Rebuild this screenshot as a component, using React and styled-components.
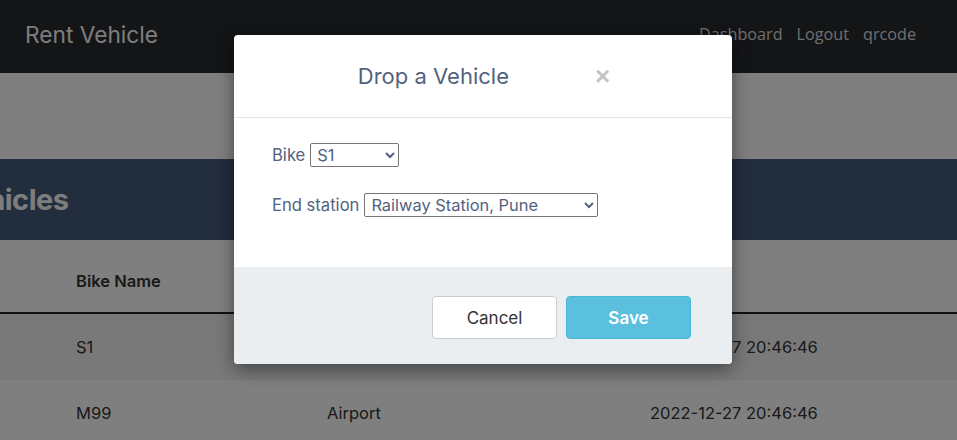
import React from 'react';
import styled, { createGlobalStyle } from 'styled-components';

const GlobalStyle = createGlobalStyle`
  html, body {
    margin: 0;
    padding: 0;
    background: #ffffff;
    overflow: hidden;
  }
  body {
    font-family: 'Inter', 'Noto Sans', sans-serif;
    color: #333333;
  }
`;

const Page = styled.div`
  width: 957px;
  height: 440px;
  overflow: hidden;
  position: relative;
`;

const Navbar = styled.nav`
  display: flex;
  align-items: center;
  justify-content: space-between;
  height: 73px;
  padding: 0 41px 0 25px;
  background: #282a2e;
`;

const Brand = styled.div`
  font-size: 22.7px;
  color: #fafafa;
  padding-bottom: 4px;
`;

const NavLinks = styled.div`
  display: flex;
  gap: 14px;
  padding-bottom: 6px;
`;

const NavLink = styled.a`
  font-family: 'Open Sans', 'Noto Sans', sans-serif;
  font-size: 16.2px;
  color: #dedede;
  text-decoration: none;
`;

const Content = styled.main`
  padding-top: 86px;
`;

const Band = styled.div`
  height: 81px;
  background: #445a7a;
  display: flex;
  align-items: center;
  overflow: hidden;
`;

const Heading = styled.h2`
  margin: 0 0 0 -49px;
  font-size: 29px;
  font-weight: 700;
  color: #fbfbfb;
  letter-spacing: -0.5px;
  white-space: nowrap;
`;

const Row = styled.div`
  display: grid;
  grid-template-columns: 251px 323px 1fr;
  height: ${p => (p.$head ? '74px' : '66px')};
  align-items: center;
  padding-left: 60px;
  background: ${p => (p.$striped ? '#f3f3f3' : '#ffffff')};
  border-bottom: ${p => (p.$head ? '2px solid #222222' : 'none')};
  box-sizing: border-box;
`;

const Cell = styled.div`
  padding: ${p => (p.$head ? '10px 0 0 16px' : '0 0 0 16px')};
  font-size: 16.5px;
  font-weight: ${p => (p.$head ? 600 : 400)};
  color: #333333;
  white-space: nowrap;
`;

const Overlay = styled.div`
  position: absolute;
  inset: 0;
  background: rgba(0, 0, 0, 0.5);
  display: flex;
  justify-content: center;
  align-items: flex-start;
  padding: 35px 0 0 9px;
`;

const Modal = styled.div`
  width: 498px;
  background: #ffffff;
  border-radius: 4px;
  box-shadow: 0 5px 18px rgba(0, 0, 0, 0.45);
  overflow: hidden;
`;

const ModalHeader = styled.div`
  height: 83px;
  display: flex;
  align-items: center;
  justify-content: center;
  border-bottom: 1px solid #e5e5e5;
  box-sizing: border-box;
  padding-left: 2px;
`;

const Title = styled.h3`
  margin: 0;
  font-size: 22px;
  font-weight: 400;
  color: #52627f;
`;

const Close = styled.button`
  margin-left: 86px;
  border: none;
  background: none;
  padding: 0;
  font-size: 26px;
  line-height: 1;
  color: #c4c4c4;
  font-family: 'Liberation Sans', sans-serif;
  font-weight: 700;
  cursor: pointer;
`;

const ModalBody = styled.div`
  padding: 25px 38px 50px;
  display: flex;
  flex-direction: column;
  gap: 26px;
`;

const Field = styled.label`
  display: flex;
  align-items: center;
  gap: 5px;
  font-size: 16.6px;
  color: #52627f;
`;

const Select = styled.select`
  width: ${p => p.$width}px;
  height: 24px;
  font-family: 'Inter', 'Noto Sans', sans-serif;
  font-size: 16.4px;
  color: #52627f;
  border: 1px solid #767676;
  border-radius: 2px;
  background: #ffffff;
  padding: 0 2px;
`;

const ModalFooter = styled.div`
  background: #ebeef0;
  display: flex;
  justify-content: flex-end;
  gap: 9px;
  padding: 29px 41px 25px;
`;

const Button = styled.button`
  width: 125px;
  height: 43px;
  border-radius: 4px;
  font-family: 'Inter', 'Noto Sans', sans-serif;
  font-size: 17px;
  font-weight: ${p => (p.$primary ? 600 : 400)};
  color: ${p => (p.$primary ? '#ffffff' : '#333333')};
  background: ${p => (p.$primary ? '#5bc0de' : '#ffffff')};
  border: 1px solid ${p => (p.$primary ? '#46b8da' : '#cccccc')};
  cursor: pointer;
`;

const rows = [
  { id: 1, bike: 'S1', station: 'Railway Station', time: '2022-12-27 20:46:46' },
  { id: 2, bike: 'M99', station: 'Airport', time: '2022-12-27 20:46:46' },
];

export default function App() {
  return (
    <Page>
      <GlobalStyle />
      <Navbar>
        <Brand>Rent Vehicle</Brand>
        <NavLinks>
          <NavLink href="#">Dashboard</NavLink>
          <NavLink href="#">Logout</NavLink>
          <NavLink href="#">qrcode</NavLink>
        </NavLinks>
      </Navbar>

      <Content>
        <Band>
          <Heading>Vehicles</Heading>
        </Band>
        <Row $head>
          <Cell $head>Bike Name</Cell>
          <Cell $head>Station</Cell>
          <Cell $head>Time</Cell>
        </Row>
        {rows.map((r, i) => (
          <Row key={r.id} $striped={i % 2 === 0}>
            <Cell>{r.bike}</Cell>
            <Cell>{r.station}</Cell>
            <Cell>{r.time}</Cell>
          </Row>
        ))}
      </Content>

      <Overlay>
        <Modal>
          <ModalHeader>
            <Title>Drop a Vehicle</Title>
            <Close aria-label="Close">×</Close>
          </ModalHeader>
          <ModalBody>
            <Field>
              Bike
              <Select $width={89} defaultValue="S1">
                <option>S1</option>
                <option>M99</option>
              </Select>
            </Field>
            <Field>
              End station
              <Select $width={234} defaultValue="Railway Station, Pune">
                <option>Railway Station, Pune</option>
                <option>Airport</option>
              </Select>
            </Field>
          </ModalBody>
          <ModalFooter>
            <Button>Cancel</Button>
            <Button $primary>Save</Button>
          </ModalFooter>
        </Modal>
      </Overlay>
    </Page>
  );
}
